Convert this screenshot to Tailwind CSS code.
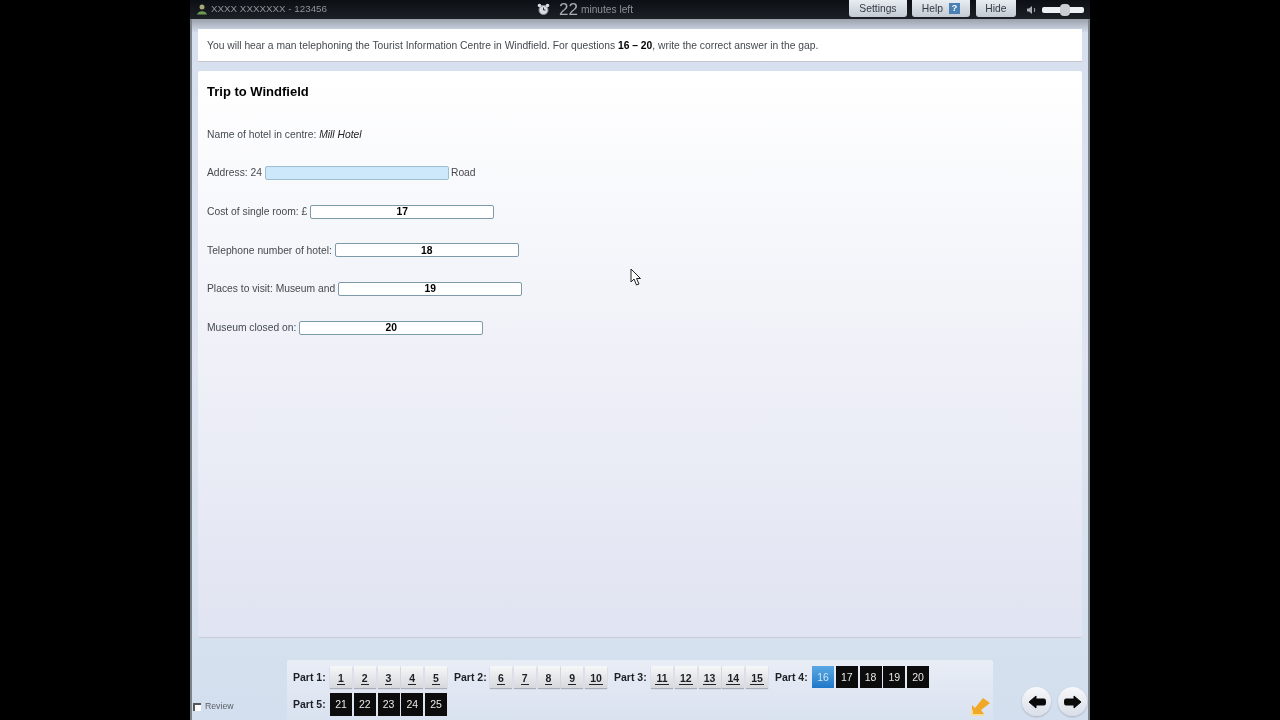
<!DOCTYPE html>
<html lang="en">
<head>
    <meta charset="UTF-8">
    <title>Trip to Windfield</title>
    <script src="https://cdn.jsdelivr.net/npm/@tailwindcss/browser@4"></script>
</head>
<body class="bg-black overflow-hidden font-['Liberation_Sans',Arial,sans-serif]">
<div class="relative w-[900px] h-[720px] ml-[190px] flex flex-col border-l-2 border-r-2 border-[#7d838c] bg-gradient-to-b from-[#d5dfee] via-[#dfe5f2] to-[#d3dfee] blur-[0.35px]">

    <!-- Top bar -->
    <div class="h-[19px] shrink-0 -mx-[2px] flex items-center bg-gradient-to-b from-[#0c0f14] to-[#1d2127] text-[#8d939b] text-[9.8px]">
        <svg class="ml-[7px] mr-[4px]" width="10" height="11" viewBox="0 0 10 11"><circle cx="5" cy="3" r="2.5" fill="#a5a878"/><path d="M0 10.5 C1 6 9 6 10 10.5Z" fill="#6f9a52"/></svg>
        <span class="w-[326px] whitespace-nowrap">XXXX XXXXXXX - 123456</span>
        <svg width="13" height="13" viewBox="0 0 13 13"><circle cx="6.5" cy="7" r="4.5" fill="#d7dde3" stroke="#8d939b"/><circle cx="2.5" cy="2.5" r="1.8" fill="#d7dde3"/><circle cx="10.5" cy="2.5" r="1.8" fill="#d7dde3"/><path d="M6.5 4.5V7H8.500" stroke="#333" fill="none"/></svg>
        <span class="ml-[9px] text-[17px] leading-none text-[#a7adb4]">22</span>
        <span class="ml-[3px] text-[10.2px] w-[268px]">minutes left</span>
        <div class="h-[17px] -mt-[2px] w-[58px] mr-[5px] rounded-b-[3px] bg-gradient-to-b from-[#e8edf2] to-[#c3cad3] text-[#343a42] text-[10.3px] flex items-center justify-center">Settings</div>
        <div class="h-[17px] -mt-[2px] w-[58px] mr-[6px] rounded-b-[3px] bg-gradient-to-b from-[#e8edf2] to-[#c3cad3] text-[#343a42] text-[10.3px] flex items-center justify-center gap-[6px]">Help<span class="w-[11px] h-[11px] bg-[#4a80b4] text-white text-[9px] font-bold leading-[11px] text-center">?</span></div>
        <div class="h-[17px] -mt-[2px] w-[40px] rounded-b-[3px] bg-gradient-to-b from-[#e8edf2] to-[#c3cad3] text-[#343a42] text-[10.3px] flex items-center justify-center">Hide</div>
        <svg class="ml-[11px]" width="10" height="10" viewBox="0 0 10 10"><path d="M0 3.5H2L5 1V9L2 6.500H0Z" fill="#a9afb6"/><path d="M7 3C8 4 8 6 7 7" stroke="#a9afb6" fill="none"/></svg>
        <div class="relative ml-[5px] w-[42px] h-[6px] bg-[#eef1f4] rounded-[2px]">
            <div class="absolute left-[18px] -top-[3px] w-[10px] h-[12px] rounded-[4px] bg-[#c9ced3]"></div>
        </div>
    </div>

    <div class="flex-1 flex flex-col px-[6px] pt-[10px] bg-gradient-to-b from-[#9aa1ab] from-0% to-transparent to-[2%]">
        <!-- Instructions -->
        <div class="h-[33px] shrink-0 flex items-center pl-[9px] pt-[2px] bg-white border-b border-[#c6c3cb] text-[10.3px] text-[#444a50]">
            <p>You will hear a man telephoning the Tourist Information Centre in Windfield. For questions <b class="text-black">16 – 20</b>, write the correct answer in the gap.</p>
        </div>

        <!-- Question panel -->
        <div class="h-[567px] shrink-0 mt-[9px] pl-[9px] pt-[14px] rounded-[2px] bg-gradient-to-b from-white to-[#e0e3f1] border-b border-[#c9cbd8] text-[10.3px] text-[#444a50]">
            <h1 class="text-[13px] leading-[14px] font-bold text-black">Trip to Windfield</h1>
            <div class="mt-[29px] h-[14px] flex items-center">Name of hotel in centre:&nbsp;<i class="text-[#222]">Mill Hotel</i></div>
            <div class="mt-[23.75px] h-[14px] flex items-center">Address: 24
                <span class="ml-[3px] mr-[2px] w-[184px] h-[14px] bg-[#cde8fb] border border-[#9cc0d0] rounded-[2px]"></span>Road</div>
            <div class="mt-[24.75px] h-[14px] flex items-center">Cost of single room: £
                <span class="ml-[3px] mr-[2px] w-[184px] h-[14px] bg-white border border-[#7d9aa8] rounded-[2px] flex items-center justify-center font-bold text-black">17</span></div>
            <div class="mt-[24.75px] h-[14px] flex items-center">Telephone number of hotel:
                <span class="ml-[3px] mr-[2px] w-[184px] h-[14px] bg-white border border-[#7d9aa8] rounded-[2px] flex items-center justify-center font-bold text-black">18</span></div>
            <div class="mt-[24.75px] h-[14px] flex items-center">Places to visit: Museum and
                <span class="ml-[3px] mr-[2px] w-[184px] h-[14px] bg-white border border-[#7d9aa8] rounded-[2px] flex items-center justify-center font-bold text-black">19</span></div>
            <div class="mt-[24.75px] h-[14px] flex items-center">Museum closed on:
                <span class="ml-[3px] mr-[2px] w-[184px] h-[14px] bg-white border border-[#7d9aa8] rounded-[2px] flex items-center justify-center font-bold text-black">20</span></div>
        </div>

        <!-- Bottom -->
        <div class="flex-1 flex items-end relative">
            <div class="w-[89px] h-[24px] shrink-0 flex items-center text-[8.7px] text-[#5a6068] -ml-[6px] mb-[1px]">
                <span class="w-[8px] h-[8px] ml-[1px] mr-[4px] border-l-2 border-t-2 border-[#555] bg-white"></span>Review
            </div>
            <div class="ml-[6px] w-[706px] h-[60px] bg-gradient-to-b from-[#e9edf6] to-[#d9e2f0] rounded-t-[3px] pt-[6px] pl-[6px] text-[10.5px] font-bold text-[#1c1f24]">
                <div class="flex items-center h-[22px]">
                    <span class="w-[37px] pt-[1px]">Part 1:</span>
                    <div class="flex gap-[1.750px]">
                        <span class="w-[22px] h-[22px] pt-[3px] flex justify-center items-center bg-gradient-to-b from-[#f6f7f8] to-[#d6d8dc] shadow-[0_1px_1px_#a9adb5]"><span class="px-[1px] border-b-[1.5px] border-[#222] leading-[12px]">1</span></span>
                        <span class="w-[22px] h-[22px] pt-[3px] flex justify-center items-center bg-gradient-to-b from-[#f6f7f8] to-[#d6d8dc] shadow-[0_1px_1px_#a9adb5]"><span class="px-[1px] border-b-[1.5px] border-[#222] leading-[12px]">2</span></span>
                        <span class="w-[22px] h-[22px] pt-[3px] flex justify-center items-center bg-gradient-to-b from-[#f6f7f8] to-[#d6d8dc] shadow-[0_1px_1px_#a9adb5]"><span class="px-[1px] border-b-[1.5px] border-[#222] leading-[12px]">3</span></span>
                        <span class="w-[22px] h-[22px] pt-[3px] flex justify-center items-center bg-gradient-to-b from-[#f6f7f8] to-[#d6d8dc] shadow-[0_1px_1px_#a9adb5]"><span class="px-[1px] border-b-[1.5px] border-[#222] leading-[12px]">4</span></span>
                        <span class="w-[22px] h-[22px] pt-[3px] flex justify-center items-center bg-gradient-to-b from-[#f6f7f8] to-[#d6d8dc] shadow-[0_1px_1px_#a9adb5]"><span class="px-[1px] border-b-[1.5px] border-[#222] leading-[12px]">5</span></span>
                    </div>
                    <span class="ml-[7px] w-[36px] pt-[1px]">Part 2:</span>
                    <div class="flex gap-[1.750px]">
                        <span class="w-[22px] h-[22px] pt-[3px] flex justify-center items-center bg-gradient-to-b from-[#f6f7f8] to-[#d6d8dc] shadow-[0_1px_1px_#a9adb5]"><span class="px-[1px] border-b-[1.5px] border-[#222] leading-[12px]">6</span></span>
                        <span class="w-[22px] h-[22px] pt-[3px] flex justify-center items-center bg-gradient-to-b from-[#f6f7f8] to-[#d6d8dc] shadow-[0_1px_1px_#a9adb5]"><span class="px-[1px] border-b-[1.5px] border-[#222] leading-[12px]">7</span></span>
                        <span class="w-[22px] h-[22px] pt-[3px] flex justify-center items-center bg-gradient-to-b from-[#f6f7f8] to-[#d6d8dc] shadow-[0_1px_1px_#a9adb5]"><span class="px-[1px] border-b-[1.5px] border-[#222] leading-[12px]">8</span></span>
                        <span class="w-[22px] h-[22px] pt-[3px] flex justify-center items-center bg-gradient-to-b from-[#f6f7f8] to-[#d6d8dc] shadow-[0_1px_1px_#a9adb5]"><span class="px-[1px] border-b-[1.5px] border-[#222] leading-[12px]">9</span></span>
                        <span class="w-[22px] h-[22px] pt-[3px] flex justify-center items-center bg-gradient-to-b from-[#f6f7f8] to-[#d6d8dc] shadow-[0_1px_1px_#a9adb5]"><span class="px-[1px] border-b-[1.5px] border-[#222] leading-[12px]">10</span></span>
                    </div>
                    <span class="ml-[7px] w-[37px] pt-[1px]">Part 3:</span>
                    <div class="flex gap-[1.750px]">
                        <span class="w-[22px] h-[22px] pt-[3px] flex justify-center items-center bg-gradient-to-b from-[#f6f7f8] to-[#d6d8dc] shadow-[0_1px_1px_#a9adb5]"><span class="px-[1px] border-b-[1.5px] border-[#222] leading-[12px]">11</span></span>
                        <span class="w-[22px] h-[22px] pt-[3px] flex justify-center items-center bg-gradient-to-b from-[#f6f7f8] to-[#d6d8dc] shadow-[0_1px_1px_#a9adb5]"><span class="px-[1px] border-b-[1.5px] border-[#222] leading-[12px]">12</span></span>
                        <span class="w-[22px] h-[22px] pt-[3px] flex justify-center items-center bg-gradient-to-b from-[#f6f7f8] to-[#d6d8dc] shadow-[0_1px_1px_#a9adb5]"><span class="px-[1px] border-b-[1.5px] border-[#222] leading-[12px]">13</span></span>
                        <span class="w-[22px] h-[22px] pt-[3px] flex justify-center items-center bg-gradient-to-b from-[#f6f7f8] to-[#d6d8dc] shadow-[0_1px_1px_#a9adb5]"><span class="px-[1px] border-b-[1.5px] border-[#222] leading-[12px]">14</span></span>
                        <span class="w-[22px] h-[22px] pt-[3px] flex justify-center items-center bg-gradient-to-b from-[#f6f7f8] to-[#d6d8dc] shadow-[0_1px_1px_#a9adb5]"><span class="px-[1px] border-b-[1.5px] border-[#222] leading-[12px]">15</span></span>
                    </div>
                    <span class="ml-[7px] w-[37px] pt-[1px]">Part 4:</span>
                    <div class="flex gap-[1.750px] text-[#e8e8e8]">
                        <span class="w-[22px] h-[22px] pt-[1px] flex justify-center items-center bg-gradient-to-b from-[#5aa9e4] to-[#1f78c8] text-[#cfe6f7] font-normal">16</span>
                        <span class="w-[22px] h-[22px] pt-[1px] flex justify-center items-center bg-[#0c0c0c] font-normal">17</span>
                        <span class="w-[22px] h-[22px] pt-[1px] flex justify-center items-center bg-[#0c0c0c] font-normal">18</span>
                        <span class="w-[22px] h-[22px] pt-[1px] flex justify-center items-center bg-[#0c0c0c] font-normal">19</span>
                        <span class="w-[22px] h-[22px] pt-[1px] flex justify-center items-center bg-[#0c0c0c] font-normal">20</span>
                    </div>
                </div>
                <div class="flex items-center h-[23px] mt-[5px]">
                    <span class="w-[37px]">Part 5:</span>
                    <div class="flex gap-[1.750px] text-[#e8e8e8]">
                        <span class="w-[22px] h-[23px] flex justify-center items-center bg-[#0c0c0c] font-normal">21</span>
                        <span class="w-[22px] h-[23px] flex justify-center items-center bg-[#0c0c0c] font-normal">22</span>
                        <span class="w-[22px] h-[23px] flex justify-center items-center bg-[#0c0c0c] font-normal">23</span>
                        <span class="w-[22px] h-[23px] flex justify-center items-center bg-[#0c0c0c] font-normal">24</span>
                        <span class="w-[22px] h-[23px] flex justify-center items-center bg-[#0c0c0c] font-normal">25</span>
                    </div>
                </div>
            </div>
        </div>
    </div>

    <!-- Pencil, arrows and pointer sit over the page -->
    <svg class="absolute left-[779px] top-[697px]" width="20" height="20" viewBox="0 0 20 20"><path d="M1 8 L4 11 L12 1 L19 6 L10 13 L13 17 L1 18Z" fill="#f0a826"/><path d="M1 13V18H13" stroke="#f7dc9a" stroke-width="2" fill="none"/></svg>
    <div class="absolute left-[830px] top-[687px] w-[29px] h-[29px] rounded-full bg-gradient-to-b from-[#f7f8fa] to-[#d9dee8] shadow-[0_1px_2px_#a9b0bd] flex items-center justify-center">
        <svg width="18" height="14" viewBox="0 0 18 14"><path d="M1 7 L8 1 V4 H16 Q17.500 4 17.500 5.500 V8.500 Q17.500 10 16 10 H8 V13Z" fill="#0a0a0a" stroke="#0a0a0a" stroke-linejoin="round"/></svg>
    </div>
    <div class="absolute left-[866px] top-[687px] w-[29px] h-[29px] rounded-full bg-gradient-to-b from-[#f7f8fa] to-[#d9dee8] shadow-[0_1px_2px_#a9b0bd] flex items-center justify-center">
        <svg width="18" height="14" viewBox="0 0 18 14"><path d="M17 7 L10 1 V4 H2 Q0.500 4 0.500 5.500 V8.500 Q0.500 10 2 10 H10 V13Z" fill="#0a0a0a" stroke="#0a0a0a" stroke-linejoin="round"/></svg>
    </div>
    <svg class="absolute left-[438px] top-[268px]" width="12" height="19" viewBox="0 0 12 19"><path d="M1 1 V14 L4 11 L6.500 17 L9 16 L6.500 10.500 H10.500Z" fill="#fff" stroke="#222" stroke-width="1"/></svg>
</div>
</body>
</html>
